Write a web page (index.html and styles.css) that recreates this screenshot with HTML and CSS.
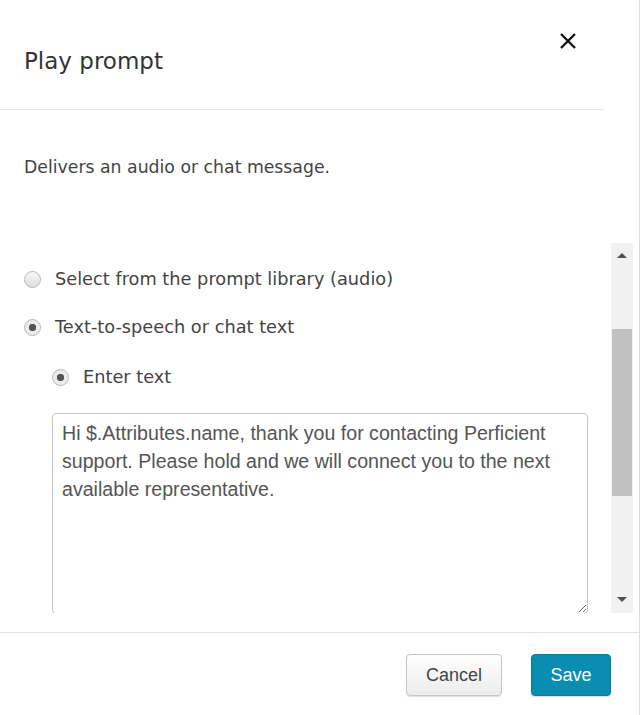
FILE: index.html
```html
<!DOCTYPE html>
<html lang="en">
<head>
<meta charset="utf-8">
<title>Play prompt</title>
<link rel="stylesheet" href="styles.css">
</head>
<body>
<div class="modal">
  <header class="modal-header">
    <h1 class="modal-title">Play prompt</h1>
    <button class="close-btn" type="button" aria-label="Close">
      <svg width="18" height="18" viewBox="0 0 18 18" aria-hidden="true">
        <path d="M2 2 L16 16 M16 2 L2 16" stroke="#111" stroke-width="2.3" stroke-linecap="butt" fill="none"/>
      </svg>
    </button>
  </header>

  <p class="modal-desc">Delivers an audio or chat message.</p>

  <div class="scroll-area">
    <div class="scroll-content">
      <label class="radio-row">
        <input type="radio" name="source" class="radio">
        <span>Select from the prompt library (audio)</span>
      </label>
      <label class="radio-row">
        <input type="radio" name="source" class="radio" checked>
        <span>Text-to-speech or chat text</span>
      </label>
      <label class="radio-row nested">
        <input type="radio" name="mode" class="radio" checked>
        <span>Enter text</span>
      </label>
      <textarea class="prompt-text" spellcheck="false">Hi $.Attributes.name, thank you for contacting Perficient support. Please hold and we will connect you to the next available representative.</textarea>
    </div>
    <div class="scrollbar" aria-hidden="true">
      <span class="arrow up"></span>
      <div class="track">
        <div class="thumb"></div>
      </div>
      <span class="arrow down"></span>
    </div>
  </div>

  <footer class="modal-footer">
    <button class="btn btn-cancel" type="button">Cancel</button>
    <button class="btn btn-save" type="button">Save</button>
  </footer>
</div>
</body>
</html>
```

FILE: styles.css
```css
* {
  box-sizing: border-box;
}

html, body {
  margin: 0;
  padding: 0;
  background: #ffffff;
}

body {
  width: 640px;
  height: 715px;
  overflow: hidden;
  font-family: "DejaVu Sans", "Open Sans", sans-serif;
  color: #444;
}

.modal {
  width: 640px;
  height: 715px;
  border-right: 1px solid #dcdcdc;
  display: flex;
  flex-direction: column;
}

/* Header */
.modal-header {
  width: 604px;
  height: 110px;
  border-bottom: 1px solid #e6e6e6;
  display: flex;
  justify-content: space-between;
  align-items: flex-start;
  padding-left: 24px;
}

.modal-title {
  margin: 46px 0 0;
  font-size: 23px;
  line-height: 30px;
  font-weight: 400;
  color: #333;
}

.close-btn {
  margin: 32px 27px 0 0;
  padding: 0;
  width: 18px;
  height: 18px;
  border: 0;
  background: none;
  display: flex;
}

/* Description */
.modal-desc {
  margin: 45px 0 0 24px;
  font-size: 17.3px;
  line-height: 24px;
  color: #444;
}

/* Scrollable body */
.scroll-area {
  margin-top: 64px;
  height: 370px;
  width: 633px;
  display: flex;
}

.scroll-content {
  flex: 1;
  overflow: hidden;
  padding: 24px 0 0 24px;
  display: flex;
  flex-direction: column;
}

.radio-row {
  display: flex;
  align-items: center;
  gap: 14px;
  height: 24px;
  flex: none;
  font-size: 17.75px;
  color: #444;
}

.radio-row + .radio-row {
  margin-top: 24px;
}

.radio-row.nested {
  margin-top: 26px;
  margin-left: 28px;
}

.radio {
  appearance: none;
  -webkit-appearance: none;
  margin: 0;
  width: 17px;
  height: 17px;
  border-radius: 50%;
  border: 1px solid #b9b9b9;
  background: linear-gradient(#f7f7f7, #dedede);
  flex: none;
}

.radio:checked {
  background: radial-gradient(circle, #555 0 3.4px, #ececec 4px);
}

.prompt-text {
  margin: 24px 0 0 28px;
  width: 536px;
  height: 201px;
  flex: none;
  padding: 5px 9px;
  border: 1px solid #c9c9c9;
  border-radius: 4px;
  font-family: "Liberation Sans", Arial, sans-serif;
  font-size: 19.6px;
  line-height: 28px;
  color: #555;
  resize: both;
  outline: none;
  overflow: hidden;
}

/* Scrollbar */
.scrollbar {
  width: 22px;
  background: #f1f1f1;
  display: flex;
  flex-direction: column;
  align-items: center;
}

.arrow {
  flex: none;
  width: 0;
  height: 0;
  border-left: 5px solid transparent;
  border-right: 5px solid transparent;
}

.arrow.up {
  margin: 10px 0 6px;
  border-bottom: 5px solid #505050;
}

.arrow.down {
  margin: 6px 0 11px;
  border-top: 5px solid #505050;
}

.track {
  flex: 1;
  width: 100%;
  padding: 65px 1px 0;
}

.thumb {
  height: 167px;
  background: #c1c1c1;
}

/* Footer */
.modal-footer {
  margin-top: 19px;
  border-top: 1px solid #e2e2e2;
  flex: 1;
  display: flex;
  justify-content: flex-end;
  align-items: flex-start;
  gap: 29px;
  padding: 21px 28px 0 0;
}

.btn {
  height: 42px;
  border-radius: 4px;
  font-family: "Liberation Sans", Arial, sans-serif;
  font-size: 18px;
  padding: 0;
}

.btn-cancel {
  width: 96px;
  border: 1px solid #c6c6c6;
  background: linear-gradient(#ffffff, #ececec);
  color: #444;
  box-shadow: 0 1px 1px rgba(0, 0, 0, 0.12);
}

.btn-save {
  width: 80px;
  border: 1px solid #0a7d9e;
  background: #0b8db2;
  color: #ffffff;
  box-shadow: 0 1px 1px rgba(0, 0, 0, 0.15);
}
```
